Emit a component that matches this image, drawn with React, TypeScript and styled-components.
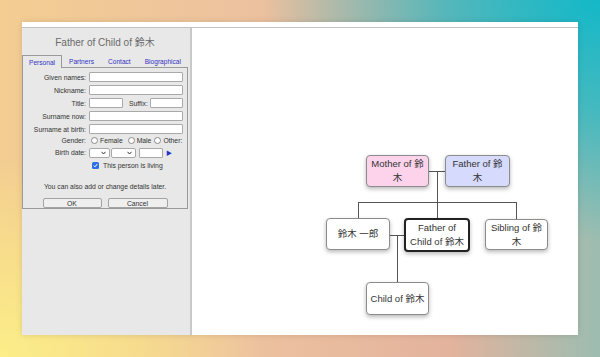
import styled, { createGlobalStyle } from "styled-components";

const GlobalStyle = createGlobalStyle`
  *{box-sizing:border-box}
  html,body{margin:0;padding:0}
  body{font-family:"Liberation Sans",Arial,"Noto Sans CJK JP",sans-serif;color:#333}
`;

const Page = styled.div`
  width:600px; height:357px; padding:22px 22px 0 22px;
  background:
    radial-gradient(ellipse 75% 90% at 100% 0%, rgba(20,184,200,1) 0%, rgba(40,184,196,.75) 35%, rgba(60,180,190,0) 75%),
    radial-gradient(ellipse 55% 70% at 0% 100%, rgba(252,238,136,1) 0%, rgba(250,230,136,.6) 45%, rgba(250,230,136,0) 80%),
    linear-gradient(90deg, #f3cd92 0%, #edc29f 40%, #e3b39d 75%, #9cbdb0 100%);
`;

const Window = styled.div`
  width:556px; height:313px; background:#fff;
  display:flex; flex-direction:column;
  box-shadow:0 0 6px rgba(0,0,0,.12);
`;

const TopStrip = styled.div`height:6px; border-bottom:1px solid #c2c2c2; background:#fff;`;

const Body = styled.div`flex:1; display:flex; min-height:0;`;

const Sidebar = styled.aside`
  width:170px; background:#e8e8e8; border-right:2px solid #c9c9c9;
  display:flex; flex-direction:column;
`;

const Title = styled.div`
  height:27px; display:flex; align-items:center; justify-content:center;
  font-size:10px; color:#6a6a6a; padding-right:2px;
`;

const Tabs = styled.div`display:flex; height:12px; margin-right:2px;`;

const Tab = styled.div<{ active?: boolean }>`
  height:${p => (p.active ? "13px" : "12px")};
  padding:0 6px; display:flex; align-items:center; white-space:nowrap;
  font-size:6.6px; color:#3333c4;
  background:#e8e8e8; position:relative; z-index:1;
  border:${p => (p.active ? "1px solid #9a9a9a" : "1px solid transparent")};
  border-bottom:none;
`;

const Panel = styled.div`
  border:1px solid #9a9a9a; margin-right:2px; height:142px;
  padding:4px 4px 0 0; display:flex; flex-direction:column; gap:3px;
`;

const Row = styled.div<{ h?: number }>`
  display:grid; grid-template-columns:63px 1fr; column-gap:3px;
  align-items:center; height:${p => p.h ?? 10}px;
`;

const Label = styled.div`text-align:right; font-size:6.8px; color:#333; white-space:nowrap;`;

const Field = styled.input<{ w?: number }>`
  height:10px; margin:0; padding:0 2px; border:1px solid #a9a9a9; background:#fff;
  border-radius:1px; font-size:6px; outline:none;
  width:${p => (p.w ? `${p.w}px` : "100%")};
  flex:${p => (p.w ? "none" : "1")};
`;

const Inline = styled.div`display:flex; align-items:center; min-width:0;`;

const InlineLabel = styled.span<{ ml?: number }>`
  font-size:6.8px; color:#333; margin-left:${p => p.ml ?? 0}px; margin-right:2px; white-space:nowrap;
`;

const Radio = styled.span<{ ml?: number }>`
  width:7px; height:7px; border:1px solid #8a8a8a; border-radius:50%; background:#fff;
  margin-left:${p => p.ml ?? 0}px; margin-right:2px; flex:none;
`;

const SelectBox = styled.div<{ w: number; ml?: number }>`
  width:${p => p.w}px; height:10px; border:1px solid #a9a9a9; border-radius:2px; background:#fff;
  margin-left:${p => p.ml ?? 0}px; display:flex; align-items:center; justify-content:flex-end; padding-right:3px;
`;

const Arrow = styled.span`font-size:6px; color:#2233cc; margin-left:3px;`;

const Check = styled.span`
  width:7px; height:7px; border-radius:1.5px; background:#2d6fe3; margin-left:3px; margin-right:4px;
  display:flex; align-items:center; justify-content:center; flex:none;
`;

const Note = styled.div`
  margin-top:9px; text-align:center; font-size:6.8px; color:#333; padding-left:4px; height:9px; line-height:9px;
`;

const Buttons = styled.div`display:flex; justify-content:center; gap:6px; margin-top:4px; padding-left:4px;`;

const Btn = styled.div<{ w: number }>`
  width:${p => p.w}px; height:10px; border:1px solid #a3a3a3; border-radius:2px; background:#efefef;
  display:flex; align-items:center; justify-content:center; font-size:6.8px; color:#333;
`;

const Canvas = styled.div`flex:1; position:relative; background:#fff; overflow:hidden;`;

const Lines = styled.svg`position:absolute; left:0; top:0; width:100%; height:100%;`;

const Node = styled.div<{ x: number; y: number; w: number; h: number; bg?: string; selected?: boolean }>`
  position:absolute; left:${p => p.x}px; top:${p => p.y}px; width:${p => p.w}px; height:${p => p.h}px;
  background:${p => p.bg ?? "#fff"};
  border:${p => (p.selected ? "2px solid #222" : "1px solid #8c8c8c")};
  border-radius:4px; box-shadow:0 2px 4px rgba(0,0,0,.28);
  display:flex; align-items:center; justify-content:center; text-align:center;
  padding:0 ${p => (p.selected ? 2 : 3)}px; font-size:9.5px; line-height:14px; color:#333;
`;

const Chevron = () => (
  <svg width="5" height="4" viewBox="0 0 5 4"><path d="M0.5 0.8 L2.5 3 L4.5 0.8" fill="none" stroke="#333" strokeWidth="1" /></svg>
);

const tabs = ["Personal", "Partners", "Contact", "Biographical"];

const nodes = [
  { x: 174, y: 127, w: 63, h: 32, bg: "#fdd3ec", text: "Mother of 鈴木" },
  { x: 253, y: 127, w: 65, h: 32, bg: "#d6dafc", text: "Father of 鈴木" },
  { x: 134, y: 190, w: 64, h: 32, text: "鈴木 一郎" },
  { x: 212, y: 190, w: 66, h: 34, text: "Father of Child of 鈴木", selected: true },
  { x: 293, y: 191, w: 63, h: 31, text: "Sibling of 鈴木" },
  { x: 174, y: 254, w: 63, h: 33, text: "Child of 鈴木" },
];

export default function App() {
  return (
    <>
      <GlobalStyle />
      <Page>
        <Window>
          <TopStrip />
          <Body>
            <Sidebar>
              <Title>Father of Child of 鈴木</Title>
              <Tabs>
                {tabs.map((t, i) => (
                  <Tab key={t} active={i === 0}>{t}</Tab>
                ))}
              </Tabs>
              <Panel>
                <Row><Label>Given names:</Label><Field /></Row>
                <Row><Label>Nickname:</Label><Field /></Row>
                <Row>
                  <Label>Title:</Label>
                  <Inline>
                    <Field w={34} />
                    <InlineLabel ml={6}>Suffix:</InlineLabel>
                    <Field />
                  </Inline>
                </Row>
                <Row><Label>Surname now:</Label><Field /></Row>
                <Row><Label>Surname at birth:</Label><Field /></Row>
                <Row h={8}>
                  <Label>Gender:</Label>
                  <Inline>
                    <Radio ml={2} /><InlineLabel>Female</InlineLabel>
                    <Radio ml={3} /><InlineLabel>Male</InlineLabel>
                    <Radio ml={1} /><InlineLabel>Other:</InlineLabel>
                  </Inline>
                </Row>
                <Row>
                  <Label>Birth date:</Label>
                  <Inline>
                    <SelectBox w={21}><Chevron /></SelectBox>
                    <SelectBox w={25} ml={1}><Chevron /></SelectBox>
                    <Field w={24} style={{ marginLeft: 3 }} />
                    <Arrow>▶</Arrow>
                  </Inline>
                </Row>
                <Row>
                  <span />
                  <Inline>
                    <Check>
                      <svg width="5" height="5" viewBox="0 0 5 5"><path d="M0.8 2.6 L2 3.8 L4.3 1" fill="none" stroke="#fff" strokeWidth="1" /></svg>
                    </Check>
                    <InlineLabel>This person is living</InlineLabel>
                  </Inline>
                </Row>
                <Note>You can also add or change details later.</Note>
                <Buttons>
                  <Btn w={59}>OK</Btn>
                  <Btn w={60}>Cancel</Btn>
                </Buttons>
              </Panel>
            </Sidebar>
            <Canvas>
              <Lines>
                <g stroke="#555" strokeWidth="1" fill="none">
                  <path d="M237 143.5 H253" />
                  <path d="M245.5 143 V174" />
                  <path d="M166 174.5 H324.5" />
                  <path d="M166.5 174 V190" />
                  <path d="M245.5 174 V190" />
                  <path d="M324.5 174 V191" />
                  <path d="M198 207.5 H212" />
                  <path d="M205.5 207 V254" />
                </g>
              </Lines>
              {nodes.map(n => (
                <Node key={n.text} x={n.x} y={n.y} w={n.w} h={n.h} bg={n.bg} selected={n.selected}>
                  {n.text}
                </Node>
              ))}
            </Canvas>
          </Body>
        </Window>
      </Page>
    </>
  );
}
